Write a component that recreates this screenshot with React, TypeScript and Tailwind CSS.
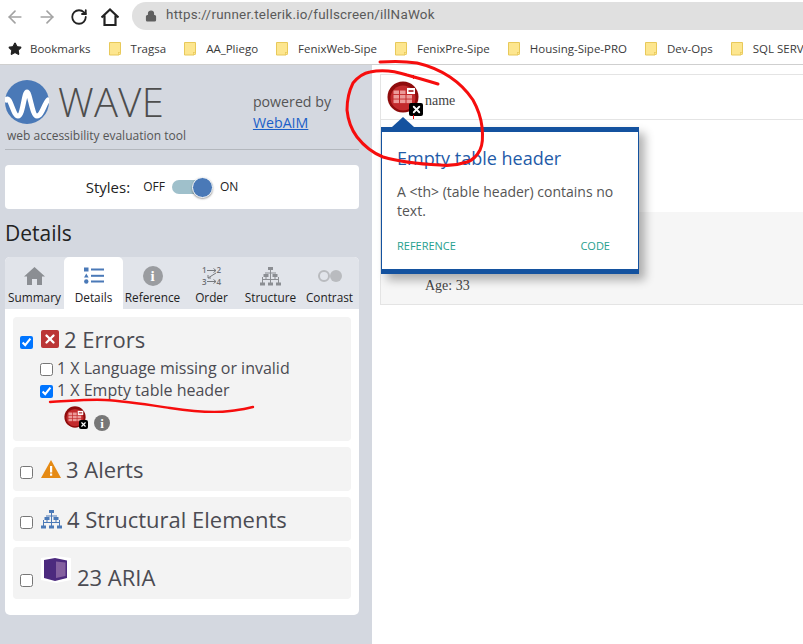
import { ArrowLeft, ArrowRight, RotateCw, Lock, Star, X } from 'lucide-react';

const bookmarks = ['Tragsa', 'AA_Pliego', 'FenixWeb-Sipe', 'FenixPre-Sipe', 'Housing-Sipe-PRO', 'Dev-Ops', 'SQL SERV'];

function FolderIcon() {
  return (
    <svg width="12" height="14" viewBox="0 0 12 14" className="shrink-0">
      <path d="M.5.5h11v11l-1.5 1.5H.5z" fill="#fde68f" stroke="#e8c95a" />
      <rect x="9.5" y="10.5" width="2" height="2" fill="#fde68f" stroke="#e8c95a" strokeWidth="0.7" />
    </svg>
  );
}

function TableErrorIcon({ size }: { size: number }) {
  return (
    <svg width={size} height={size} viewBox="0 0 32 32" className="block">
      <circle cx="16" cy="16" r="16" fill="#fff" />
      <circle cx="16" cy="16" r="15.5" fill="#8f0c0c" />
      <circle cx="16" cy="17" r="12.5" fill="#c22a2c" />
      <g fill="#ec9a98">
        <rect x="6.5" y="9.5" width="5.5" height="3.6" />
        <rect x="13" y="9.5" width="5.5" height="3.6" />
        <rect x="6.5" y="14" width="5.5" height="3.6" />
        <rect x="13" y="14" width="5.5" height="3.6" />
        <rect x="19.5" y="14" width="5.5" height="3.6" />
        <rect x="6.5" y="18.5" width="5.5" height="3.6" />
        <rect x="13" y="18.5" width="5.5" height="3.6" />
        <rect x="19.5" y="18.5" width="5.5" height="3.6" />
      </g>
      <rect x="20" y="7" width="8" height="6" fill="#fff" />
      <rect x="21.5" y="9.2" width="5" height="1.6" fill="#a31a1c" />
    </svg>
  );
}

function BlackBadge({ big }: { big?: boolean }) {
  return (
    <span className={`absolute flex items-center justify-center bg-black rounded-[2px] ${big ? 'w-[14px] h-[13px] left-[22px] top-[22px]' : 'w-[9px] h-[9px] left-[15px] top-[14px]'}`}>
      <X size={big ? 11 : 7} color="#fff" strokeWidth={4} />
    </span>
  );
}

function StructureIcon({ color, className }: { color: string; className?: string }) {
  return (
    <svg viewBox="0 0 21 19" className={className} fill={color}>
      <rect x="8" y="0" width="5" height="3" />
      <rect x="10" y="3" width="1" height="13" />
      <rect x="5" y="5.5" width="11" height="1" />
      <rect x="3.5" y="7" width="5" height="3" />
      <rect x="12.5" y="7" width="5" height="3" />
      <rect x="2.5" y="12" width="16" height="1" />
      <rect x="2" y="10" width="1" height="6" />
      <rect x="18" y="10" width="1" height="6" />
      <rect x="5.5" y="10" width="1" height="3" />
      <rect x="14.5" y="10" width="1" height="3" />
      <rect x="0" y="15.5" width="5" height="3" />
      <rect x="8" y="15.5" width="5" height="3" />
      <rect x="16" y="15.5" width="5" height="3" />
    </svg>
  );
}

function TabIcon({ name }: { name: string }) {
  if (name === 'Summary') {
    return <svg width="21" height="18" viewBox="0 0 21 18" fill="#8b8e93"><path d="M10.5 0 21 9.5h-3V18h-5v-6H8v6H3V9.5H0z" /></svg>;
  }
  if (name === 'Details') {
    return (
      <svg width="20" height="18" viewBox="0 0 20 18" fill="#4a79b7">
        <rect x="0" y="0.5" width="4.5" height="4" />
        <path d="M2.3 6.5 4.6 10.5H0z" />
        <circle cx="2.3" cy="14.5" r="2.2" />
        <rect x="7" y="1.5" width="13" height="2" />
        <rect x="7" y="7.8" width="13" height="2" />
        <rect x="7" y="13.5" width="13" height="2" />
      </svg>
    );
  }
  if (name === 'Reference') {
    return (
      <span className="flex items-center justify-center w-[20px] h-[20px] rounded-full bg-[#9a9ca0]">
        <span className="font-['Liberation_Serif',serif] font-bold text-white text-[15px] leading-none">i</span>
      </span>
    );
  }
  if (name === 'Order') {
    return (
      <svg width="20" height="20" viewBox="0 0 20 20" fill="none" stroke="#77797d" strokeWidth="1" className="overflow-visible">
        <text x="0" y="7" fontSize="8" fontWeight="600" fill="#6f7175" stroke="none" fontFamily="'Open Sans',sans-serif">1</text>
        <text x="14.5" y="7" fontSize="8" fontWeight="600" fill="#6f7175" stroke="none" fontFamily="'Open Sans',sans-serif">2</text>
        <text x="0" y="18.5" fontSize="8" fontWeight="600" fill="#6f7175" stroke="none" fontFamily="'Open Sans',sans-serif">3</text>
        <text x="14.5" y="18.5" fontSize="8" fontWeight="600" fill="#6f7175" stroke="none" fontFamily="'Open Sans',sans-serif">4</text>
        <path d="M5 4.5h9M11.5 2.5l2.5 2-2.5 2M14 7l-8 5M6 9v3h3M5 15.5h9M11.5 13.5l2.5 2-2.5 2" />
      </svg>
    );
  }
  if (name === 'Structure') {
    return <StructureIcon color="#8b8e93" className="w-[21px] h-[19px]" />;
  }
  return (
    <span className="flex items-center">
      <span className="w-[12px] h-[12px] rounded-full border-2 border-[#b9bbbf]" />
      <span className="w-[12px] h-[12px] rounded-full bg-[#b9bbbf]" />
    </span>
  );
}

const tabs = ['Summary', 'Details', 'Reference', 'Order', 'Structure', 'Contrast'];

export default function App() {
  return (
    <div className="relative w-[803px] h-[644px] overflow-hidden bg-white flex flex-col font-['Open_Sans',sans-serif]">
      {/* browser chrome */}
      <div className="h-[65px] shrink-0 border-b border-[#cfcfcf] flex flex-col">
        <div className="h-[33px] flex items-center pl-[5px] pt-[1px]">
          <ArrowLeft size={20} color="#a3a3a3" strokeWidth={2} />
          <ArrowRight size={20} color="#a3a3a3" strokeWidth={2} className="ml-[12px]" />
          <RotateCw size={18} color="#222" strokeWidth={2.4} className="ml-[13px]" />
          <svg width="18" height="20" viewBox="0 0 18 20" fill="none" stroke="#222" strokeWidth="2.2" className="ml-[13px]">
            <path d="M0.5 10.5 9 2.5l8.5 8M3.5 8.5V18h11V8.5" />
          </svg>
          <div className="ml-[13px] flex-1 h-[28px] mb-[3px] bg-[#e0e0e0] rounded-l-full flex items-center pl-[13px] gap-[9px]">
            <Lock size={12} color="#5f5f5f" fill="#5f5f5f" strokeWidth={2.4} />
            <span className="text-[13.4px] text-[#5a5a5a] font-['Roboto',sans-serif] tracking-[0.25px]">https://runner.telerik.io/fullscreen/illNaWok</span>
          </div>
        </div>
        <div className="h-[31px] flex items-center pl-[8px] text-[11.5px] text-[#3a3a3a] whitespace-nowrap overflow-hidden">
          <Star size={14} color="#222" fill="#222" className="shrink-0" />
          <span className="ml-[8px] mr-[18px]">Bookmarks</span>
          {bookmarks.map((b) => (
            <div key={b} className="flex items-center gap-[10px] mr-[18px]">
              <FolderIcon />
              <span>{b}</span>
            </div>
          ))}
        </div>
      </div>

      <div className="flex-1 flex min-h-0">
        {/* WAVE sidebar */}
        <aside className="w-[372px] shrink-0 bg-[#d4d8e0] pl-[5px] pr-[13px]">
          <div className="h-[85px] border-b border-[#b3b7bd] relative flex">
            <div className="pt-[15px]">
              <div className="flex items-center">
                <svg width="44" height="44" viewBox="0 0 44 44">
                  <circle cx="22" cy="22" r="22" fill="#4a79b7" />
                  <path d="M1 20c4-6 7 16 12 16s6-24 9-24 5 24 10 24 7-12 11-16" fill="none" stroke="#fff" strokeWidth="5" strokeLinecap="round" />
                </svg>
                <span className="ml-[9px] text-[40px] leading-[44px] font-light text-[#4d4d4d] tracking-[0.3px]">WAVE</span>
              </div>
              <div className="ml-[2px] text-[12px] leading-[16px] mt-[4px] text-[#555]">web accessibility evaluation tool</div>
            </div>
            <div className="ml-auto mr-[28px] pt-[26px] text-[14.2px] leading-[21px] text-[#555]">
              <div>powered by</div>
              <a href="#" className="underline text-[#1a5fc8]">WebAIM</a>
            </div>
          </div>

          <div className="mt-[15px] h-[44px] bg-white rounded-[4px] flex items-center justify-center text-[#222] pr-[40px]">
            <span className="text-[15px] mr-[13px]">Styles:</span>
            <span className="text-[12px]">OFF</span>
            <span className="relative mx-[7px] w-[41px] h-[14px] rounded-full bg-[#9fc0cb]">
              <span className="absolute right-0 top-[-3px] w-[21px] h-[21px] rounded-full bg-[#4a79b7] border border-white shadow-[0_1px_2px_rgba(0,0,0,0.4)]" />
            </span>
            <span className="text-[12px]">ON</span>
          </div>

          <h2 className="mt-[9px] text-[21px] leading-[30px] text-[#222]">Details</h2>

          <div className="mt-[9px] h-[358px] bg-white rounded-[5px] overflow-hidden">
            <div className="h-[52px] bg-[#e1e4ea] flex">
              {tabs.map((t) => (
                <div key={t} className={`w-[59px] flex flex-col items-center pt-[7px] ${t === 'Details' ? 'bg-white rounded-t-[5px]' : ''}`}>
                  <div className="h-[24px] flex items-center justify-center"><TabIcon name={t} /></div>
                  <span className="text-[11.8px] leading-[18px] text-[#222] whitespace-nowrap">{t}</span>
                </div>
              ))}
            </div>

            <div className="px-[8px] pt-[8px] flex flex-col gap-[6px] text-[#4b4b52]">
              <section className="h-[124px] bg-[#f3f3f3] rounded-[4px] pl-[7px] pt-[9px]">
                <div className="flex items-center h-[26px]">
                  <input type="checkbox" defaultChecked className="w-[13px] h-[13px] mt-[7px]" />
                  <span className="ml-[8px] w-[18px] h-[18px] rounded-[2px] bg-[#bb3535] flex items-center justify-center">
                    <X size={14} color="#fff" strokeWidth={4} />
                  </span>
                  <span className="ml-[5px] text-[22px]">2 Errors</span>
                </div>
                <div className="mt-[5px] ml-[20px] text-[16px] leading-[22px]">
                  <div className="flex items-center">
                    <input type="checkbox" className="w-[13px] h-[13px] mt-[3px]" />
                    <span className="ml-[4px]">1 X Language missing or invalid</span>
                  </div>
                  <div className="flex items-center">
                    <input type="checkbox" defaultChecked className="w-[13px] h-[13px] mt-[3px]" />
                    <span className="ml-[4px]">1 X Empty table header</span>
                  </div>
                </div>
                <div className="ml-[44px] mt-[5px] flex items-end">
                  <div className="relative w-[22px] h-[24px]">
                    <TableErrorIcon size={22} />
                    <BlackBadge />
                  </div>
                  <span className="ml-[8px] mb-[-1px] w-[16px] h-[16px] rounded-full bg-[#777] flex items-center justify-center">
                    <span className="font-['Liberation_Serif',serif] font-bold text-white text-[13px] leading-none">i</span>
                  </span>
                </div>
              </section>

              <section className="h-[44px] bg-[#f3f3f3] rounded-[4px] pl-[7px] flex items-center">
                <input type="checkbox" className="w-[13px] h-[13px] mt-[6px]" />
                <svg width="20" height="18" viewBox="0 0 20 18" className="ml-[8px]">
                  <path d="M10 0 20 18H0z" fill="#e58a14" />
                  <rect x="9" y="6" width="2.2" height="6.5" fill="#fff" />
                  <rect x="9" y="13.5" width="2.2" height="2.2" fill="#fff" />
                </svg>
                <span className="ml-[5px] text-[22px]">3 Alerts</span>
              </section>

              <section className="h-[44px] bg-[#f3f3f3] rounded-[4px] pl-[7px] flex items-center">
                <input type="checkbox" className="w-[13px] h-[13px] mt-[6px]" />
                <StructureIcon color="#4a79b7" className="ml-[8px] w-[21px] h-[19px]" />
                <span className="ml-[5px] text-[22px]">4 Structural Elements</span>
              </section>

              <section className="h-[52px] bg-[#f3f3f3] rounded-[4px] pl-[7px] flex items-start">
                <input type="checkbox" className="w-[13px] h-[13px] mt-[27px]" />
                <svg width="30" height="28" viewBox="0 0 30 28" className="ml-[8px] mt-[9px]">
                  <path d="M0 2 15 0l15 2v22l-15 3-15-3z" fill="#fff" />
                  <path d="M3 4 14 2v23L3 22z" fill="#4c2a7e" />
                  <path d="M14 2l12 2.5V22l-12 3z" fill="#4c2a7e" />
                  <path d="M15 5.5l9.5 1v13.5l-9.5 2z" fill="#84609f" />
                </svg>
                <span className="ml-[6px] mt-[15px] text-[22px] leading-[30px]">23 ARIA</span>
              </section>
            </div>
          </div>
        </aside>

        {/* page under test */}
        <main className="relative flex-1 pt-[9px] pl-[8px] font-['Liberation_Serif',serif] text-[14px] text-[#444]">
          <div className="h-[231px] border border-r-0 border-[#e4e4e4] flex flex-col">
            <div className="h-[45px] shrink-0 border-b border-[#e4e4e4] flex items-center pl-[44px]">
              <span className="mt-[6px]">name</span>
            </div>
            <div className="h-[92px] shrink-0" />
            <div className="flex-1 bg-[#f6f6f6] flex items-end pl-[44px] pb-[8px]">
              <span>Age: 33</span>
            </div>
          </div>

          <div className="absolute left-[15px] top-[16px] w-[32px] h-[32px]">
            <TableErrorIcon size={32} />
            <BlackBadge big />
          </div>

          {/* tooltip */}
          <div className="absolute left-[9px] top-[62px] w-[258px] h-[147px] bg-white border-x border-y-[5px] border-[#14529f] shadow-[6px_6px_9px_rgba(0,0,0,0.3)] font-['Open_Sans',sans-serif] px-[15px]">
            <span className="absolute left-[10px] top-[-15px] w-0 h-0 border-x-[11px] border-x-transparent border-b-[10px] border-b-[#14529f]" />
            <h3 className="mt-[13px] text-[18px] leading-[26px] text-[#1f5ba8]">Empty table header</h3>
            <p className="mt-[11px] text-[14px] leading-[19px] text-[#555]">A &lt;th&gt; (table header) contains no text.</p>
            <div className="mt-[18px] flex justify-between pr-[13px] text-[11px] leading-[16px] text-[#26a08e]">
              <span>REFERENCE</span>
              <span>CODE</span>
            </div>
          </div>
        </main>
      </div>

      {/* marker scribbles drawn over the screenshot */}
      <svg width="803" height="644" viewBox="0 0 803 644" fill="none" stroke="#f60d0d" strokeLinecap="round" strokeLinejoin="round" strokeWidth="3" className="absolute inset-0 pointer-events-none">
        <path d="M380 62C393 61 405 61 417 63 430 66 441 71 450 77 459 83 467 91 473 100 478 109 481 118 482 127 483 136 483 144 480 150 477 156 473 160 467 162 458 165 449 166 440 165 420 164 400 162 383 157 373 153 364 146 357 137 351 129 348 120 347 110 347 100 349 91 353 83 358 77 364 73 370 72 383 69 395 71 407 75 418 78 428 81 438 84" />
        <path strokeWidth="2.4" d="M50 402C70 401 90 399 105 400 125 401 150 405 170 408 190 411 215 413 230 411 240 410 248 408 253 407" />
      </svg>
      <span className="absolute left-[413px] top-[75px] w-[1px] h-[4px] bg-[#f60d0d]" />
      <span className="absolute left-[413px] top-[115px] w-[1px] h-[4px] bg-[#f60d0d]" />
    </div>
  );
}
